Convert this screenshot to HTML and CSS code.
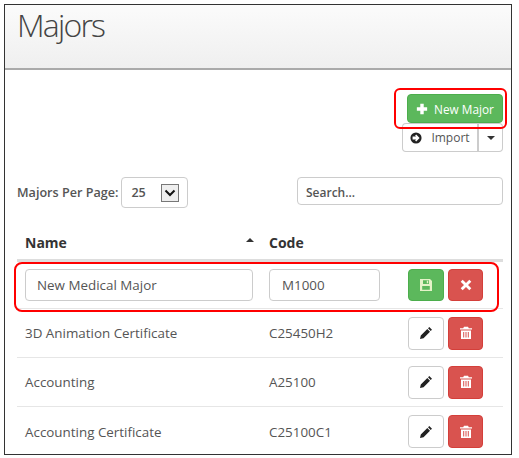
FILE: index.html
```html
<!DOCTYPE html>
<html lang="en">
<head>
    <meta charset="UTF-8">
    <title>Majors</title>
    <link rel="stylesheet" href="styles.css">
</head>
<body>
    <div class="frame">
        <div class="page-header">
            <h1>Majors</h1>
        </div>
        <div class="content">
            <div class="actions">
                <div class="callout callout-new"></div>
                <button class="btn btn-success btn-new">
                    <svg class="icon" viewBox="0 0 14 14"><path d="M5 1h4v4h4v4H9v4H5V9H1V5h4z" fill="#fff"/></svg>
                    New Major
                </button>
                <div class="btn-group">
                    <button class="btn btn-import">
                        <svg class="icon" viewBox="0 0 14 14"><path fill-rule="evenodd" d="M7 .5a6.500 6.500 0 1 1 0 13 6.500 6.500 0 0 1 0-13zM7.200 3 6 4.200 7 5.200H3v3.600h4l-1 1L7.200 11 11.200 7z" fill="#222"/></svg>
                        Import
                    </button>
                    <button class="btn btn-caret"><span class="caret"></span></button>
                </div>
            </div>
            <div class="filters">
                <div class="per-page">
                    <label>Majors Per Page:</label>
                    <div class="select-box">
                        <span>25</span>
                        <span class="select-arrow">
                            <svg viewBox="0 0 12 8" width="12" height="8"><path d="M1.500 1.500 6 6l4.500-4.500" fill="none" stroke="#111" stroke-width="2"/></svg>
                        </span>
                    </div>
                </div>
                <div class="search">Search...</div>
            </div>
            <div class="table">
                <div class="row row-head">
                    <div class="col-name">Name <span class="sort"></span></div>
                    <div class="col-code">Code</div>
                </div>
                <div class="row row-edit">
                    <div class="callout callout-row"></div>
                    <div class="col-name"><div class="field">New Medical Major</div></div>
                    <div class="col-code"><div class="field field-code">M1000</div></div>
                    <div class="col-btns">
                        <button class="btn btn-success btn-sq">
                            <svg class="icon" viewBox="0 0 14 14"><path fill-rule="evenodd" d="M1 1h10l2 2v10H1zM4 2.200V6h6V2.200zM3.200 8v3.800h7.600V8zM7.800 2.800h1.400v2.400H7.800z" fill="#e4f3c8"/></svg>
                        </button>
                        <button class="btn btn-danger btn-sq">
                            <svg class="icon" viewBox="0 0 14 14"><path d="M3.700 1.800 7 5.100l3.300-3.300 2 2L9 7l3.300 3.300-2 2L7 9l-3.300 3.300-2-2L5 7 1.700 3.800z" fill="#fff"/></svg>
                        </button>
                    </div>
                </div>
                <div class="row">
                    <div class="col-name">3D Animation Certificate</div>
                    <div class="col-code">C25450H2</div>
                    <div class="col-btns">
                        <button class="btn btn-sq"><svg class="icon" viewBox="0 0 14 14"><path d="M10.300 1 13 3.700l-1.300 1.300L9 2.300zM8.300 3 11 5.700 4.500 12.200 1 13l.8-3.500z" fill="#222"/></svg></button>
                        <button class="btn btn-danger btn-sq"><svg class="icon" viewBox="0 0 14 14"><path fill-rule="evenodd" d="M5 .8h4l.8 1.400H13v1.300H1V2.200h3.200zM2 4.500h10V13H2zM4.200 6v5.500h1V6zM6.500 6v5.500h1V6zM8.800 6v5.500h1V6z" fill="#fff"/></svg></button>
                    </div>
                </div>
                <div class="row">
                    <div class="col-name">Accounting</div>
                    <div class="col-code">A25100</div>
                    <div class="col-btns">
                        <button class="btn btn-sq"><svg class="icon" viewBox="0 0 14 14"><path d="M10.300 1 13 3.700l-1.300 1.300L9 2.300zM8.300 3 11 5.700 4.500 12.200 1 13l.8-3.500z" fill="#222"/></svg></button>
                        <button class="btn btn-danger btn-sq"><svg class="icon" viewBox="0 0 14 14"><path fill-rule="evenodd" d="M5 .8h4l.8 1.400H13v1.300H1V2.200h3.200zM2 4.500h10V13H2zM4.200 6v5.500h1V6zM6.500 6v5.500h1V6zM8.800 6v5.500h1V6z" fill="#fff"/></svg></button>
                    </div>
                </div>
                <div class="row row-last">
                    <div class="col-name">Accounting Certificate</div>
                    <div class="col-code">C25100C1</div>
                    <div class="col-btns">
                        <button class="btn btn-sq"><svg class="icon" viewBox="0 0 14 14"><path d="M10.300 1 13 3.700l-1.300 1.300L9 2.300zM8.300 3 11 5.700 4.500 12.200 1 13l.8-3.500z" fill="#222"/></svg></button>
                        <button class="btn btn-danger btn-sq"><svg class="icon" viewBox="0 0 14 14"><path fill-rule="evenodd" d="M5 .8h4l.8 1.400H13v1.300H1V2.200h3.200zM2 4.500h10V13H2zM4.200 6v5.500h1V6zM6.500 6v5.500h1V6zM8.800 6v5.500h1V6z" fill="#fff"/></svg></button>
                    </div>
                </div>
            </div>
        </div>
    </div>
</body>
</html>
```

FILE: styles.css
```css
* {
    box-sizing: border-box;
}
body {
    font-family: 'Open Sans', sans-serif;
    font-size: 13.4px;
    color: #555;
    background-color: #fff;
    margin: 0;
    padding: 4px 7px 3px 4px;
}
.frame {
    height: 451px;
    border: 1.5px solid #333;
    overflow: hidden;
}
.page-header {
    height: 65px;
    padding: 0 12px;
    background: linear-gradient(#fbfbfb, #efefef);
    border-bottom: 2px solid #aaa;
}
h1 {
    margin: 0;
    font-size: 32px;
    font-weight: 300;
    line-height: 40px;
    color: #444;
    letter-spacing: -1.8px;
}
.content {
    padding: 24px 8px 0 12px;
}
.actions {
    position: relative;
    display: flex;
    flex-direction: column;
    align-items: flex-end;
}
.btn {
    font-family: inherit;
    font-size: 12px;
    display: flex;
    align-items: center;
    justify-content: center;
    color: #555;
    background-color: #fff;
    border: 1px solid #ccc;
    border-radius: 4px;
    padding: 0;
}
.btn-success {
    background-color: #5cb85c;
    border-color: #4cae4c;
    color: #fff;
}
.btn-danger {
    background-color: #d9534f;
    border-color: #d43f3a;
}
.icon {
    width: 12px;
    height: 12px;
}
.btn-new {
    width: 96px;
    height: 29px;
    gap: 6px;
    font-size: 11.8px;
}
.btn-group {
    display: flex;
}
.btn-import {
    width: 77px;
    height: 29px;
    gap: 9px;
    border-radius: 4px 0 0 4px;
    border-right: 2px solid #ccc;
}
.btn-caret {
    width: 24px;
    height: 29px;
    border-left: none;
    border-radius: 0 4px 4px 0;
}
.caret {
    border-left: 4px solid transparent;
    border-right: 4px solid transparent;
    border-top: 4px solid #333;
}
.callout {
    position: absolute;
    border: 2px solid #f00;
    border-radius: 6px;
    pointer-events: none;
}
.callout-new {
    top: -6px;
    right: -4px;
    width: 113px;
    height: 41px;
    z-index: 1;
}
.callout-row {
    top: 0;
    left: -3px;
    width: 485px;
    height: 50px;
    border-radius: 8px;
}
.filters {
    display: flex;
    justify-content: space-between;
    align-items: flex-start;
    margin-top: 25px;
}
.per-page {
    display: flex;
    align-items: center;
    gap: 3px;
}
.per-page label {
    font-size: 12.6px;
    font-weight: 600;
    color: #555;
}
.select-box {
    display: flex;
    align-items: center;
    justify-content: space-between;
    width: 67px;
    height: 31px;
    padding: 0 9px;
    border: 1px solid #ccc;
    border-radius: 4px;
    font-size: 12.6px;
    font-weight: 600;
}
.select-arrow {
    display: flex;
    align-items: center;
    justify-content: center;
    width: 18px;
    height: 18px;
    margin-right: -1px;
    background-color: #eee;
    border: 1px solid #777;
}
.search {
    display: flex;
    align-items: center;
    width: 206px;
    height: 28px;
    padding: 2px 8px 0;
    border: 1px solid #ccc;
    border-radius: 4px;
    font-size: 12px;
    font-weight: 600;
}
.table {
    margin-top: 21px;
}
.row {
    position: relative;
    display: grid;
    grid-template-columns: 244px 139px 103px;
    align-items: center;
    height: 49px;
    border-bottom: 1px solid #e6e6e6;
}
.row-head {
    height: 33px;
    padding-bottom: 4px;
    border-bottom: 3px solid #ddd;
    font-size: 14px;
    font-weight: 700;
    color: #333;
}
.row-edit {
    height: 47px;
}
.row-last {
    border-bottom: none;
}
.col-name {
    position: relative;
    padding-left: 8px;
    padding-right: 8px;
}
.col-code {
    padding-left: 8px;
}
.col-btns {
    display: flex;
    gap: 4px;
    padding-left: 8px;
}
.sort {
    position: absolute;
    top: 5px;
    right: 7px;
    border-left: 4px solid transparent;
    border-right: 4px solid transparent;
    border-bottom: 4px solid #333;
}
.field {
    display: flex;
    align-items: center;
    height: 32px;
    padding-left: 11px;
    border: 1px solid #ccc;
    border-radius: 4px;
}
.field-code {
    width: 111px;
    padding-left: 12px;
}
.btn-sq {
    width: 36px;
    height: 33px;
}
.btn-sq .icon {
    width: 14px;
    height: 14px;
}
.btn-sq.btn-danger {
    width: 35px;
}
.row-edit .btn-sq {
    height: 32px;
}
```
